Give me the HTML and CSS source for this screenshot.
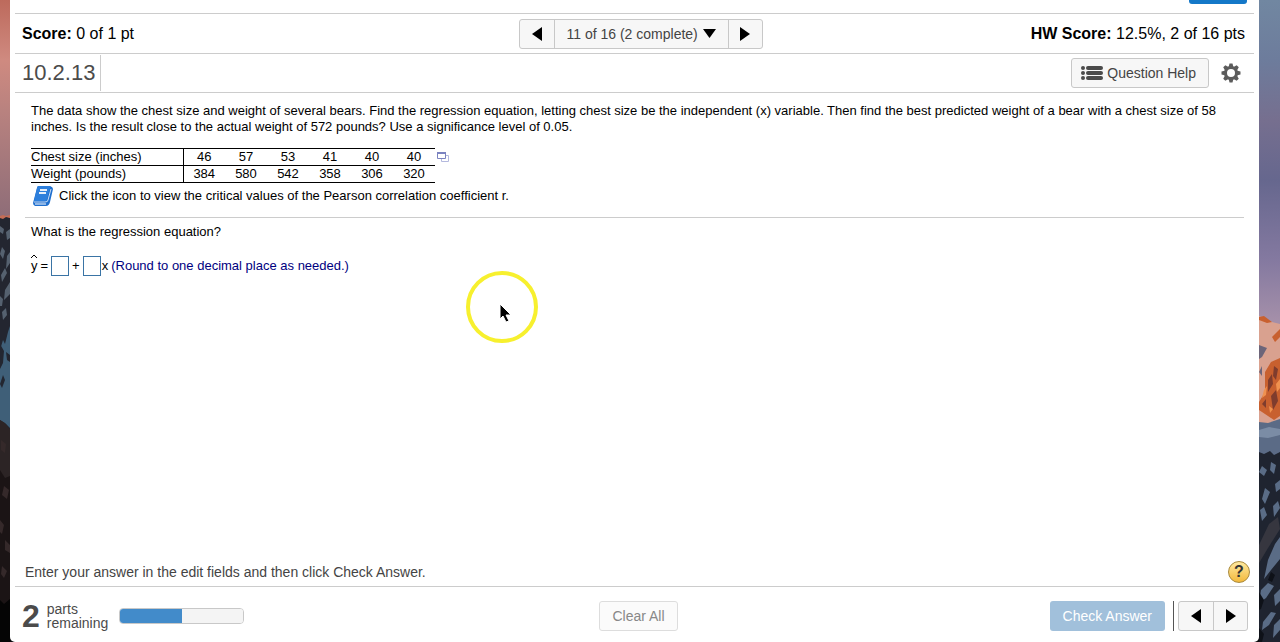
FILE: index.html
```html
<!DOCTYPE html>
<html lang="en">
<head>
    <meta charset="UTF-8">
    <meta name="viewport" content="width=device-width, initial-scale=1.0">
    <title>Homework 10.2.13</title>
    <link rel="stylesheet" href="styles.css">
</head>
<body>
    <svg class="wallpaper wallpaper-left" viewBox="0 0 10 642" preserveAspectRatio="none" aria-hidden="true">
        <path fill="#232630" d="M0 217l3 1 3-2 4 2v425H0z"/>
        <path fill="#55616f" d="M0 226l4 3-1 5-3-2zM6 232l4-3v9l-3 2zM2 247l3 4-2 8-3-5zM7 256l3-4v11l-4 6zM1 275l4-7 2 5-5 9zM5 290l5-8v12l-6 6zM0 296l3 3-1 7H0zM2 312l4-4 1 7-4 5z"/>
        <path fill="#3f5f78" d="M0 350l3-10 2 4 3-12 2-6v102l-4-4-6-4z"/>
        <path fill="#232630" d="M0 344l4 7-1 12-3 6zM6 352l4 3v7l-3-2zM3 375l2 5-3 8-2-4z"/>
        <path fill="#2c2425" d="M0 420l5 3 5 6v213H0z"/>
        <path fill="#1b1415" d="M0 470l5 8 5-2v166H0z"/>
        <path fill="#35292a" d="M1 440l5 4-1 9-4-3zM4 486l5 4-2 9-5-4zM0 520l4 5-2 9-2-2zM5 540l5 5v8l-5-3zM2 566l5 5-3 7-3-4z"/>
        <path fill="#050505" d="M0 600l4 4 6-5v43H0z"/>
        <path fill="#c46c55" d="M0 216l3-1 3 1 4-1v3l-4-1-3 2-3-1z"/>
    </svg>

    <div class="window">
        <div class="top-strip">
            <button class="save-button" type="button" aria-label="Save"></button>
        </div>

        <header class="score-bar">
            <div><b>Score:</b> 0 of 1 pt</div>
            <nav class="button-group question-nav">
                <button type="button" aria-label="Previous question">
                    <svg width="10" height="14" viewBox="0 0 10 14"><path d="M10 0v14L0 7z"/></svg>
                </button>
                <label class="question-picker">
                    <select aria-label="Question">
                        <option>11 of 16 (2 complete)</option>
                    </select>
                    <svg width="13" height="9" viewBox="0 0 13 9"><path d="M0 0h13L6.500 9z"/></svg>
                </label>
                <button type="button" aria-label="Next question">
                    <svg width="10" height="14" viewBox="0 0 10 14"><path d="M0 0v14l10-7z"/></svg>
                </button>
            </nav>
            <div class="hw-score"><b>HW Score:</b> 12.5%, 2 of 16 pts</div>
        </header>

        <div class="title-bar">
            <h1>10.2.13</h1>
            <button class="help-button" type="button">
                <svg width="22" height="16" viewBox="0 0 22 16" fill="#4b4b4b">
                    <circle cx="2" cy="3" r="2"/><circle cx="2" cy="8" r="2"/><circle cx="2" cy="13" r="2"/>
                    <rect x="5" y="1" width="17" height="4" rx="2"/><rect x="5" y="6" width="17" height="4" rx="2"/><rect x="5" y="11" width="17" height="4" rx="2"/>
                </svg>
                Question Help
            </button>
            <button class="icon-button gear" type="button" aria-label="Settings">
                <svg width="20" height="20" viewBox="-10 -10 20 20">
                    <g fill="#5c5c5c">
                        <path id="teeth" d="M-1.500-9.500h3l1 4h-5zM-1.500 9.500h3l1-4h-5z"/>
                        <use href="#teeth" transform="rotate(45)"/>
                        <use href="#teeth" transform="rotate(90)"/>
                        <use href="#teeth" transform="rotate(135)"/>
                    </g>
                    <circle r="5.500" fill="none" stroke="#5c5c5c" stroke-width="3"/>
                </svg>
            </button>
        </div>

        <main class="exercise">
            <p>The data show the chest size and weight of several bears. Find the regression equation, letting chest size be the independent (x) variable. Then find the best predicted weight of a bear with a chest size of 58 inches. Is the result close to the actual weight of 572 pounds? Use a significance level of 0.05.</p>

            <div class="data">
                <table>
                    <tr><th scope="row">Chest size (inches)</th><td>46</td><td>57</td><td>53</td><td>41</td><td>40</td><td>40</td></tr>
                    <tr><th scope="row">Weight (pounds)</th><td>384</td><td>580</td><td>542</td><td>358</td><td>306</td><td>320</td></tr>
                </table>
                <button class="icon-button" type="button" aria-label="Open data in a new window">
                    <svg width="12" height="11" viewBox="0 0 12 11">
                        <path fill="#fff" stroke="#b4b9de" d="M4.500 3.500h7v6h-7z"/>
                        <path fill="#fff" stroke="#7b83c0" d="M.5.5h8v6h-8z"/>
                        <path fill="#7b83c0" d="M0 0h9v2H0z"/>
                    </svg>
                </button>
            </div>

            <div class="reference">
                <button class="icon-button" type="button" aria-label="Critical values">
                    <svg width="20" height="20" viewBox="0 0 20 20">
                        <path fill="#1f6fce" d="M6 0h11q3 1 3 3l-3 13q-1 4-4 4H2q-2-1-2-3L4 2q0-2 2-2z"/>
                        <path fill="#2d7fdc" d="M6 0h10q2 0 1 2l-3 11q0 2-2 2H1L4 2q0-2 2-2z"/>
                        <path fill="none" stroke="#c9dcf4" d="M1 16h11q3 0 3-2l3-11"/>
                        <path fill="none" stroke="#fff" d="M2 18h11"/>
                        <path stroke="#e5eefa" stroke-width="2" d="M7 4h7M6 7h7"/>
                    </svg>
                </button>
                Click the icon to view the critical values of the Pearson correlation coefficient r.
            </div>

            <hr>

            <p>What is the regression equation?</p>

            <div class="equation">
                <span class="y-hat">
                    <svg width="6" height="4" viewBox="0 0 6 4" role="img" aria-label="hat"><path fill="none" stroke="#000" d="M0 4l3-3 3 3"/></svg>
                    <span>y</span>
                </span>
                <span>=</span>
                <input type="text" aria-label="Intercept">
                <span>+</span>
                <input type="text" aria-label="Slope">
                <span class="variable">x</span>
                <span class="hint">(Round to one decimal place as needed.)</span>
            </div>
        </main>

        <div class="instructions">
            <span>Enter your answer in the edit fields and then click Check Answer.</span>
            <button class="round-help" type="button">?</button>
        </div>

        <footer>
            <div class="parts">
                <b>2</b>
                <label for="partsDone">parts<br>remaining</label>
                <progress id="partsDone" value="1" max="2"></progress>
            </div>
            <button class="clear-button" type="button" disabled>Clear All</button>
            <div class="actions">
                <button class="check-button" type="button" disabled>Check Answer</button>
                <div class="divider"></div>
                <div class="button-group">
                    <button type="button" aria-label="Previous part">
                        <svg width="10" height="14" viewBox="0 0 10 14"><path d="M10 0v14L0 7z"/></svg>
                    </button>
                    <button type="button" aria-label="Next part">
                        <svg width="10" height="14" viewBox="0 0 10 14"><path d="M0 0v14l10-7z"/></svg>
                    </button>
                </div>
            </div>
        </footer>
    </div>

    <svg class="wallpaper wallpaper-right" viewBox="0 0 21 642" preserveAspectRatio="none" aria-hidden="true">
        <path fill="#d9a18f" d="M0 316l6 2 7 4 8 2v106H0z"/>
        <path fill="#c8602f" d="M0 317l5-1 8 6-5 1-8-3zM13 337l8-8v8l-5 5zM6 372l6-10 9-4v58l-6 4-6-4-9-6v-8l6-10z"/>
        <path fill="#7f3c2d" d="M9 380l4-6 1 10-5 8zM15 366l4 3-2 11-3-4zM12 396l5-6 2 11-5 9zM3 404l4-5v9z"/>
        <path fill="#f0914f" d="M17 384l4-5v9l-3 4zM5 390l3-4-1 9-4 3zM10 406l4 3-3 4z"/>
        <path fill="#6d6579" d="M0 345l8 3-5 9-3 2zM0 372l3-6v10z"/>
        <path fill="#5b6b86" d="M0 422l9 1 12-4v50H0z"/>
        <path fill="#7b8ca5" d="M0 430l10-3 11 2v6l-12 3-9-1z"/>
        <path fill="#1f2430" d="M0 452l5 2 6-3 4 4 6-3v190H0z"/>
        <path fill="#5a6c86" d="M3 466l5 4-3 6-5-4zM12 462l5 3-2 9-4-4zM16 484l5-4v9l-4 3zM6 488l5 4-5 12-3-5zM1 510l4-3 3 8-5 6zM14 506l5-5 2 7-6 9zM9 560l7-16 5-7v22l-9 11-7 9zM2 590l7-7 6 3-8 12-7 5zM15 595l6-6v12l-5 5zM4 622l8-10 5 1-7 12-7 5zM15 625l6-6v11l-7 8z"/>
        <path fill="#36363f" d="M10 524l9-7 2 12-12 19-9 15v-18z"/>
        <path fill="#0e1118" d="M0 592l5 8-3 9-2 1zM12 572l4 3-3 7-4-2zM0 628l5 6-2 8H0z"/>
    </svg>

    <!-- mouse pointer with the click highlight -->
    <svg class="pointer" width="74" height="74" viewBox="0 0 74 74" aria-hidden="true">
        <circle cx="37" cy="37" r="34" fill="none" stroke="#f7f02e" stroke-width="4"/>
        <path fill="#000" stroke="#fff" d="M35 34v15l3-3 3 6 3-1-3-6h5z"/>
    </svg>
</body>
</html>
```

FILE: styles.css
```css
* {
    box-sizing: border-box;
}
body {
    margin: 0;
    min-height: 100vh;
    display: grid;
    grid-template-columns: 10px 1fr 21px;
    position: relative;
    background: #0b0b0e;
    font-family: "Liberation Sans", Arial, sans-serif;
    font-size: 14px;
    color: #000;
}
button, select, input {
    font-family: inherit;
    font-size: inherit;
    color: inherit;
    margin: 0;
}
button {
    display: flex;
    align-items: center;
    justify-content: center;
}
.wallpaper {
    width: 100%;
    height: 100%;
    min-height: 100vh;
}
.wallpaper-left {
    background: linear-gradient(#bd6a5c 0, #cf8a80 60px, #b9827f 110px, #8e6d78 217px);
}
.wallpaper-right {
    background: linear-gradient(#7187a1 0, #6d7c9c 60px, #766f8f 120px, #66678e 180px, #8479a0 260px, #a48fa9 320px);
}
.window {
    display: flex;
    flex-direction: column;
    padding: 0 5px;
    background: #fff;
    border-radius: 0 0 5px 5px;
}
.top-strip {
    display: flex;
    justify-content: flex-end;
    height: 13px;
    padding-right: 7px;
}
.save-button {
    width: 58px;
    height: 4px;
    padding: 0;
    border: none;
    border-radius: 0 0 3px 3px;
    background: #1478c8;
}

/* header */
.score-bar {
    display: grid;
    grid-template-columns: 1fr auto 1fr;
    align-items: center;
    height: 40px;
    padding: 0 9px 0 7px;
    border-top: 1px solid #ccc;
    font-size: 16px;
}
.hw-score {
    text-align: right;
}
.button-group {
    display: flex;
    height: 30px;
    background: #f7f7f7;
    border: 1px solid #c8c8c8;
    border-radius: 3px;
    font-size: 14px;
}
.button-group button {
    width: 34px;
    padding: 0;
    border: none;
    background: none;
}
.button-group > * + *,
.button-group > * + button {
    border-left: 1px solid #c8c8c8;
}
.question-nav {
    margin-left: 14px;
}
.question-picker {
    display: flex;
    align-items: center;
    gap: 4px;
    padding: 0 12px;
}
.question-picker select {
    appearance: none;
    padding: 0;
    border: none;
    background: none;
    color: #444;
}
.title-bar {
    display: flex;
    align-items: center;
    height: 40px;
    padding: 0 13px 0 7px;
    border-top: 1px solid #ccc;
    border-bottom: 1px solid #ccc;
}
h1 {
    margin: 0 auto 0 0;
    padding-right: 5px;
    border-right: 1px solid #ccc;
    font-size: 22px;
    font-weight: normal;
    line-height: 36px;
    color: #4b4b4b;
}
.help-button {
    gap: 4px;
    height: 30px;
    padding: 0 12px 0 9px;
    border: 1px solid #c8c8c8;
    border-radius: 3px;
    background: #f7f7f7;
    color: #444;
}
.icon-button {
    padding: 0;
    border: none;
    background: none;
}
.gear {
    margin-left: 12px;
}

/* exercise */
.exercise {
    flex: 1;
    padding: 10px 10px 0;
    font-size: 13px;
    line-height: 16px;
}
.exercise p {
    margin: 0 6px;
}
.data {
    display: flex;
    align-items: flex-start;
    gap: 2px;
    margin: 13px 6px 0;
}
.data .icon-button {
    margin-top: 4px;
}
table {
    border-collapse: collapse;
}
tr {
    height: 17px;
    border-top: 1px solid #000;
    border-bottom: 1px solid #000;
}
th, td {
    padding: 0;
    text-align: center;
    line-height: 16px;
}
th {
    width: 152px;
    border-right: 1px solid #000;
    font-weight: normal;
    text-align: left;
}
td {
    width: 42px;
}
.reference {
    display: flex;
    align-items: center;
    gap: 6px;
    margin: 3px 8px 0;
}
hr {
    margin: 11px 0 6px;
    border: none;
    border-top: 1px solid #ccc;
}
.equation {
    display: flex;
    align-items: center;
    gap: 3px;
    margin: 16px 6px 0;
}
.equation input {
    width: 18px;
    height: 20px;
    padding: 0;
    border: 1px solid #3a74a5;
    background: #fff;
}
.equation .variable {
    margin-left: -2px;
}
.y-hat {
    display: flex;
    flex-direction: column;
    align-items: center;
}
.y-hat svg {
    margin-top: -4px;
}
.hint {
    color: #000080;
}

/* bottom */
.instructions {
    display: flex;
    align-items: center;
    justify-content: space-between;
    height: 29px;
    padding: 0 4px 0 10px;
    color: #444;
}
.round-help {
    width: 22px;
    height: 22px;
    padding: 0;
    border: 1px solid #a98a3c;
    border-radius: 50%;
    background: linear-gradient(#ffe9a0, #f3b93c);
    font-size: 16px;
    font-weight: bold;
    color: #333;
}
footer {
    display: grid;
    grid-template-columns: 1fr auto 1fr;
    align-items: center;
    height: 56px;
    padding: 2px 6px 0 7px;
    border-top: 1px solid #ccc;
}
.parts {
    display: flex;
    align-items: center;
    gap: 7px;
    color: #4b4b4b;
}
.parts b {
    font-size: 32px;
    line-height: 32px;
}
.parts label {
    line-height: 14px;
}
progress {
    appearance: none;
    width: 125px;
    height: 16px;
    margin-left: 4px;
    border: 1px solid #c8c8c8;
    border-radius: 4px;
    overflow: hidden;
}
progress::-webkit-progress-bar {
    background: #f4f4f4;
}
progress::-webkit-progress-value {
    background: #428bca;
}
.clear-button {
    height: 30px;
    margin-left: 7px;
    padding: 0 12px;
    border: 1px solid #ddd;
    border-radius: 3px;
    background: #fbfbfb;
    color: #888;
}
.actions {
    display: flex;
    justify-content: flex-end;
}
.check-button {
    height: 30px;
    padding: 0 13px;
    border: none;
    border-radius: 3px;
    background: #a1c0db;
    color: #fff;
}
.divider {
    width: 1px;
    margin: 0 4px 0 8px;
    background: #555;
}

.pointer {
    position: absolute;
    left: 465px;
    top: 270px;
    pointer-events: none;
}
```
